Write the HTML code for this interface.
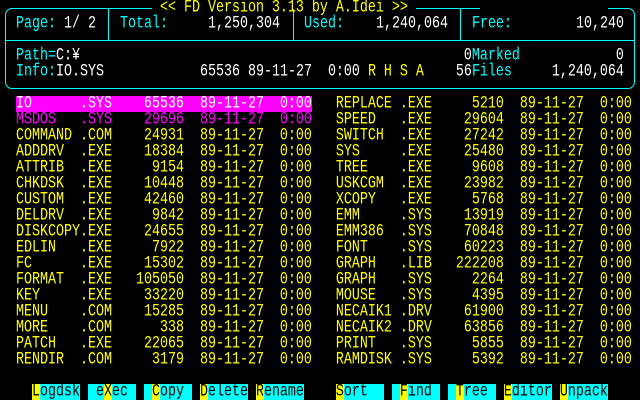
<!DOCTYPE html>
<html><head><meta charset="utf-8"><style>
html,body{margin:0;padding:0;background:#000;}
#s{position:relative;width:640px;height:400px;overflow:hidden;background:#000;}
.l{position:absolute;left:0;width:640px;height:16px;white-space:pre;font-family:"Liberation Mono","Noto Sans CJK JP",monospace;font-size:13.33px;line-height:16px;color:#fff;transform:translateY(1px) scaleY(1.3);transform-origin:50% 55%;}
.c{color:#0ff}.y{color:#ff0}.m{color:#f0f}.w{color:#fff}.k{color:#000}
.b{position:absolute;background:#0ff}
.bg{position:absolute;top:384px;height:16px;}
</style></head><body><div id="s">
<div style="position:absolute;left:5px;top:8px;width:628px;height:79px;border:1px solid #0ff;border-radius:7px;"></div>
<div style="position:absolute;left:152px;top:6px;width:264px;height:5px;background:#000"></div>
<div style="position:absolute;left:480px;top:6px;width:128px;height:5px;background:#000"></div>
<div class="b" style="left:6px;top:40px;width:628px;height:1px"></div>
<div class="b" style="left:108px;top:9px;width:1px;height:31px"></div>
<div class="b" style="left:293px;top:9px;width:1px;height:31px"></div>
<div class="b" style="left:460px;top:9px;width:1px;height:31px"></div>
<div style="position:absolute;left:16px;top:96px;width:296px;height:16px;background:#f0f"></div>

<div class="bg" style="left:32px;width:48px;background:#0ff"></div><div class="bg" style="left:32px;width:8px;background:#ff0"></div>
<div class="bg" style="left:88px;width:48px;background:#0ff"></div><div class="bg" style="left:104px;width:8px;background:#ff0"></div>
<div class="bg" style="left:144px;width:48px;background:#0ff"></div><div class="bg" style="left:152px;width:8px;background:#ff0"></div>
<div class="bg" style="left:200px;width:48px;background:#0ff"></div><div class="bg" style="left:200px;width:8px;background:#ff0"></div>
<div class="bg" style="left:256px;width:48px;background:#0ff"></div><div class="bg" style="left:256px;width:8px;background:#ff0"></div>
<div class="bg" style="left:336px;width:48px;background:#0ff"></div><div class="bg" style="left:336px;width:8px;background:#ff0"></div>
<div class="bg" style="left:392px;width:48px;background:#0ff"></div><div class="bg" style="left:400px;width:8px;background:#ff0"></div>
<div class="bg" style="left:448px;width:48px;background:#0ff"></div><div class="bg" style="left:456px;width:8px;background:#ff0"></div>
<div class="bg" style="left:504px;width:48px;background:#0ff"></div><div class="bg" style="left:504px;width:8px;background:#ff0"></div>
<div class="bg" style="left:560px;width:48px;background:#0ff"></div><div class="bg" style="left:560px;width:8px;background:#ff0"></div>

<div class="l y" style="top:0px">                    &lt;&lt; FD Version 3.13 by A.Idei &gt;&gt;</div>
<div class="l" style="top:16px">  <span class="c">Page:</span> 1/ 2   <span class="c">Total:</span>     1,250,304   <span class="c">Used:</span>    1,240,064   <span class="c">Free:</span>        10,240</div>
<div class="l" style="top:48px">  <span class="c">Path=</span>C:¥                                                0<span class="c">Marked</span>            0</div>
<div class="l" style="top:64px">  <span class="c">Info:</span>IO.SYS            65536 89-11-27  0:00 <span class="y">R H S A</span>    56<span class="c">Files</span>     1,240,064</div>

<div class="l y" style="top:96px">  <span class="w">IO      .SYS    65536  89-11-27  0:00</span>   REPLACE .EXE     5210  89-11-27  0:00</div>
<div class="l y" style="top:112px">  <span class="m">MSDOS   .SYS    29696  89-11-27  0:00</span>   SPEED   .EXE    29604  89-11-27  0:00</div>
<div class="l y" style="top:128px">  COMMAND .COM    24931  89-11-27  0:00   SWITCH  .EXE    27242  89-11-27  0:00</div>
<div class="l y" style="top:144px">  ADDDRV  .EXE    18384  89-11-27  0:00   SYS     .EXE    25480  89-11-27  0:00</div>
<div class="l y" style="top:160px">  ATTRIB  .EXE     9154  89-11-27  0:00   TREE    .EXE     9608  89-11-27  0:00</div>
<div class="l y" style="top:176px">  CHKDSK  .EXE    10448  89-11-27  0:00   USKCGM  .EXE    23982  89-11-27  0:00</div>
<div class="l y" style="top:192px">  CUSTOM  .EXE    42460  89-11-27  0:00   XCOPY   .EXE     5768  89-11-27  0:00</div>
<div class="l y" style="top:208px">  DELDRV  .EXE     9842  89-11-27  0:00   EMM     .SYS    13919  89-11-27  0:00</div>
<div class="l y" style="top:224px">  DISKCOPY.EXE    24655  89-11-27  0:00   EMM386  .SYS    70848  89-11-27  0:00</div>
<div class="l y" style="top:240px">  EDLIN   .EXE     7922  89-11-27  0:00   FONT    .SYS    60223  89-11-27  0:00</div>
<div class="l y" style="top:256px">  FC      .EXE    15302  89-11-27  0:00   GRAPH   .LIB   222208  89-11-27  0:00</div>
<div class="l y" style="top:272px">  FORMAT  .EXE   105050  89-11-27  0:00   GRAPH   .SYS     2264  89-11-27  0:00</div>
<div class="l y" style="top:288px">  KEY     .EXE    33220  89-11-27  0:00   MOUSE   .SYS     4395  89-11-27  0:00</div>
<div class="l y" style="top:304px">  MENU    .COM    15285  89-11-27  0:00   NECAIK1 .DRV    61900  89-11-27  0:00</div>
<div class="l y" style="top:320px">  MORE    .COM      338  89-11-27  0:00   NECAIK2 .DRV    63856  89-11-27  0:00</div>
<div class="l y" style="top:336px">  PATCH   .EXE    22065  89-11-27  0:00   PRINT   .SYS     5855  89-11-27  0:00</div>
<div class="l y" style="top:352px">  RENDIR  .COM     3179  89-11-27  0:00   RAMDISK .SYS     5392  89-11-27  0:00</div>

<div class="l k" style="top:384px">    Logdsk  eXec   Copy  Delete Rename    Sort    Find   Tree  Editor Unpack</div>
</div></body></html>
